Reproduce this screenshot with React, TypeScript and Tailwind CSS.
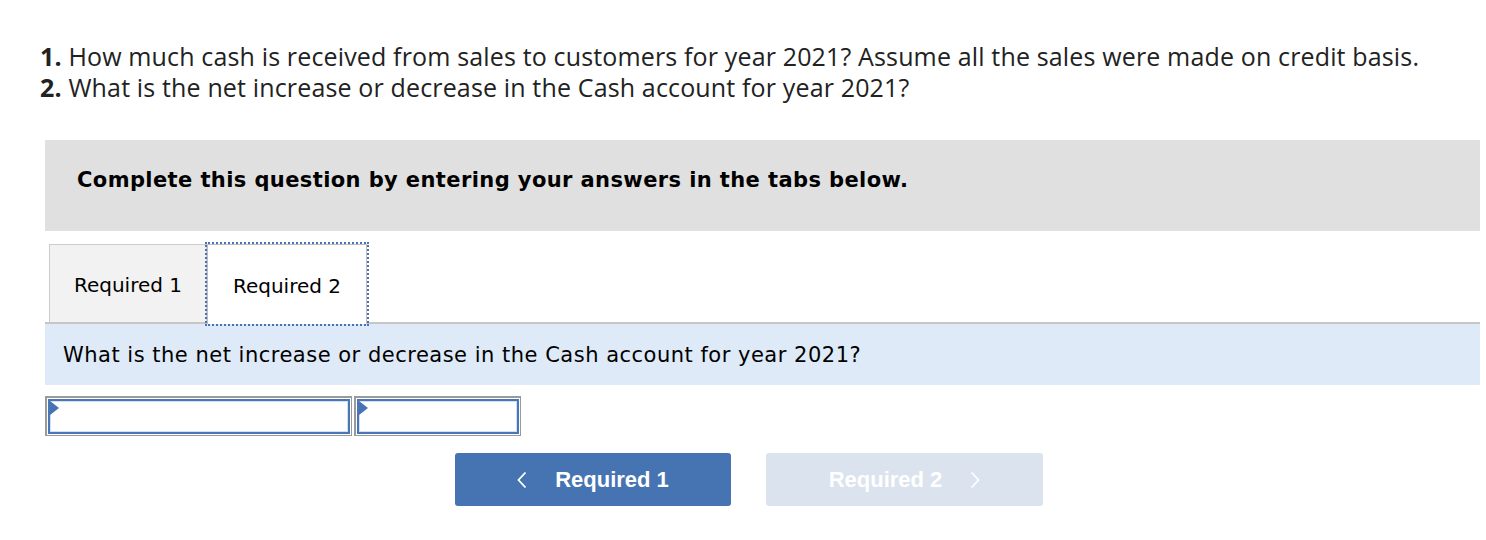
import React from 'react';

const AnswerCell = ({ width }: { width: string }) => (
  <div className={`relative h-[40px] ${width} border-t-2 border-l-2 border-b border-r border-[#9a9a9a] bg-white p-px`}>
    <div className="h-full w-full border-2 border-[#4a76b8] bg-white shadow-[inset_0_0_0_1px_#cfe0f3]" />
    <svg className="absolute left-[3px] top-[3px]" width="9" height="14" viewBox="0 0 9 14">
      <path d="M0 0 L9 7 L0 14 Z" fill="#4674b2" />
    </svg>
  </div>
);

export default function App() {
  return (
    <div className="min-h-[540px] bg-white pt-[41px] font-['Verdana','DejaVu_Sans',sans-serif] text-black">
      <div className="pl-[40px] font-['Open_Sans',sans-serif] text-[25px] leading-[31px] tracking-[0.15px] text-[#222]">
        <p>
          <b>1.</b> How much cash is received from sales to customers for year 2021? Assume all the sales were made on credit basis.
        </p>
        <p>
          <b>2.</b> What is the net increase or decrease in the Cash account for year 2021?
        </p>
      </div>

      <div className="ml-[45px] mr-[6px] mt-[37px]">
        <div className="h-[91px] bg-[#e0e0e0] pl-[32px] pt-[25px] text-[21px] font-bold tracking-[0.4px]">
          Complete this question by entering your answers in the tabs below.
        </div>

        <div className="mt-[13px] flex border-b-2 border-[#c6c6c6]">
          <div className="ml-[4px] flex h-[78px] w-[158px] items-center justify-center border border-b-0 border-[#cccccc] bg-[#f2f2f2] pt-[3px] text-[20px]">
            Required 1
          </div>
          <div className="relative -mb-[2px] flex h-[80px] w-[160px] items-center justify-center border border-b-0 border-[#bdbdbd] bg-white pt-[3px] text-[20px] outline-2 outline-dotted outline-[#4674b2] outline-offset-0">
            Required 2
          </div>
        </div>

        <div className="flex h-[61px] items-center bg-[#deeaf7] pl-[18px] pt-[3px] text-[21px] tracking-[0.5px]">
          What is the net increase or decrease in the Cash account for year 2021?
        </div>

        <div className="mt-[11px] flex gap-[2px]">
          <AnswerCell width="w-[307px]" />
          <AnswerCell width="w-[167px]" />
        </div>

        <div className="mt-[17px] flex gap-[35px] pl-[410px] font-['Liberation_Sans','Arial',sans-serif] text-[22px] font-bold text-white">
          <button className="flex h-[53px] w-[276px] items-center justify-center gap-[28px] rounded-[3px] bg-[#4674b2]">
            <svg width="10" height="18" viewBox="0 0 10 18" fill="none" stroke="white" strokeWidth="1.8">
              <path d="M8.5 1.5 L1.5 9 L8.5 16.5" />
            </svg>
            <span>Required 1</span>
          </button>
          <button className="flex h-[53px] w-[277px] items-center justify-center gap-[28px] rounded-[3px] bg-[#dbe3ef]">
            <span>Required 2</span>
            <svg width="10" height="18" viewBox="0 0 10 18" fill="none" stroke="white" strokeWidth="1.8">
              <path d="M1.5 1.5 L8.5 9 L1.5 16.5" />
            </svg>
          </button>
        </div>
      </div>
    </div>
  );
}
